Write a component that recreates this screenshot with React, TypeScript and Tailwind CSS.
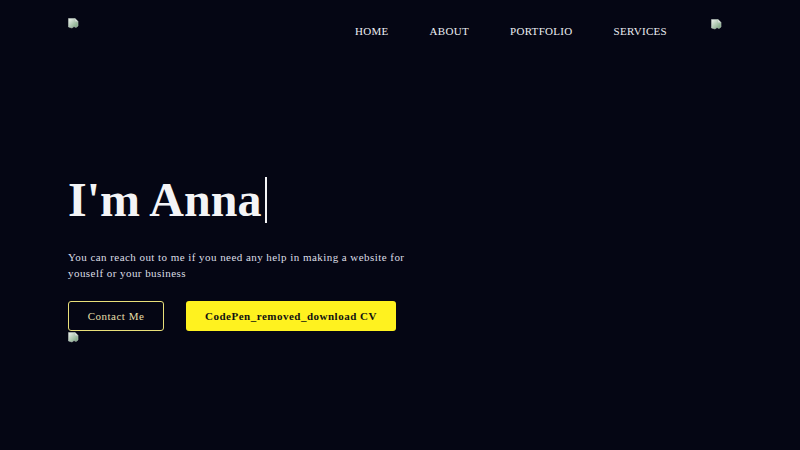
const BrokenImg = () => (
  <svg width="12" height="12" viewBox="0 0 12 12" className="block">
    <defs>
      <linearGradient id="bi" x1="0" y1="0" x2="1" y2="1">
        <stop offset="0" stopColor="#f2f5f1" />
        <stop offset="1" stopColor="#6f9c74" />
      </linearGradient>
    </defs>
    <path d="M0.5 0.5h6.5l3 3v4.5l-2 1.5-2-1-2 1.5-3.5-1z" fill="url(#bi)" stroke="#b9c2bc" strokeWidth="0.6" />
    <path d="M7 0.5v3h3" fill="#dfe6e0" stroke="#b9c2bc" strokeWidth="0.6" />
  </svg>
);

const navItems = ['HOME', 'ABOUT', 'PORTFOLIO', 'SERVICES'];

export default function App() {
  return (
    <div className="w-[800px] h-[450px] bg-[#050614] text-white font-['Liberation_Serif',serif] overflow-hidden">
      {/* Header */}
      <header className="flex items-start h-[44px] pl-[68px] pt-[18px]">
        <BrokenImg />
        <nav className="ml-[275px] flex gap-[41px] pt-[5px]">
          {navItems.map((item) => (
            <a key={item} className="text-[11px] leading-[16px] tracking-[0.3px] text-[#eceef3]">
              {item}
            </a>
          ))}
        </nav>
        <div className="ml-[44px] pt-[1px]">
          <BrokenImg />
        </div>
      </header>

      {/* Hero */}
      <section className="pl-[68px] pt-[132px]">
        <h1 className="flex items-center text-[48px] font-bold leading-none text-[#f4f4f6]">
          I'm Anna
          <span className="ml-[4px] inline-block w-[2px] h-[46px] bg-[#f4f4f6]" />
        </h1>
        <p className="mt-[25px] max-w-[345px] text-[11px] leading-[16px] tracking-[0.45px] text-[#dcdee6]">
          You can reach out to me if you need any help in making a website for youself or your business
        </p>
        <div className="mt-[20px] flex gap-[22px]">
          <button className="w-[96px] h-[30px] border-[1.5px] border-[#e9df7a] rounded-[3px] text-[11px] tracking-[0.5px] text-[#e6dfa8]">
            Contact Me
          </button>
          <button className="w-[210px] h-[30px] bg-[#fff21f] rounded-[3px] text-[11px] font-bold tracking-[0.5px] text-[#111]">
            CodePen_removed_download CV
          </button>
        </div>
        <div className="mt-[1px]">
          <BrokenImg />
        </div>
      </section>
    </div>
  );
}
